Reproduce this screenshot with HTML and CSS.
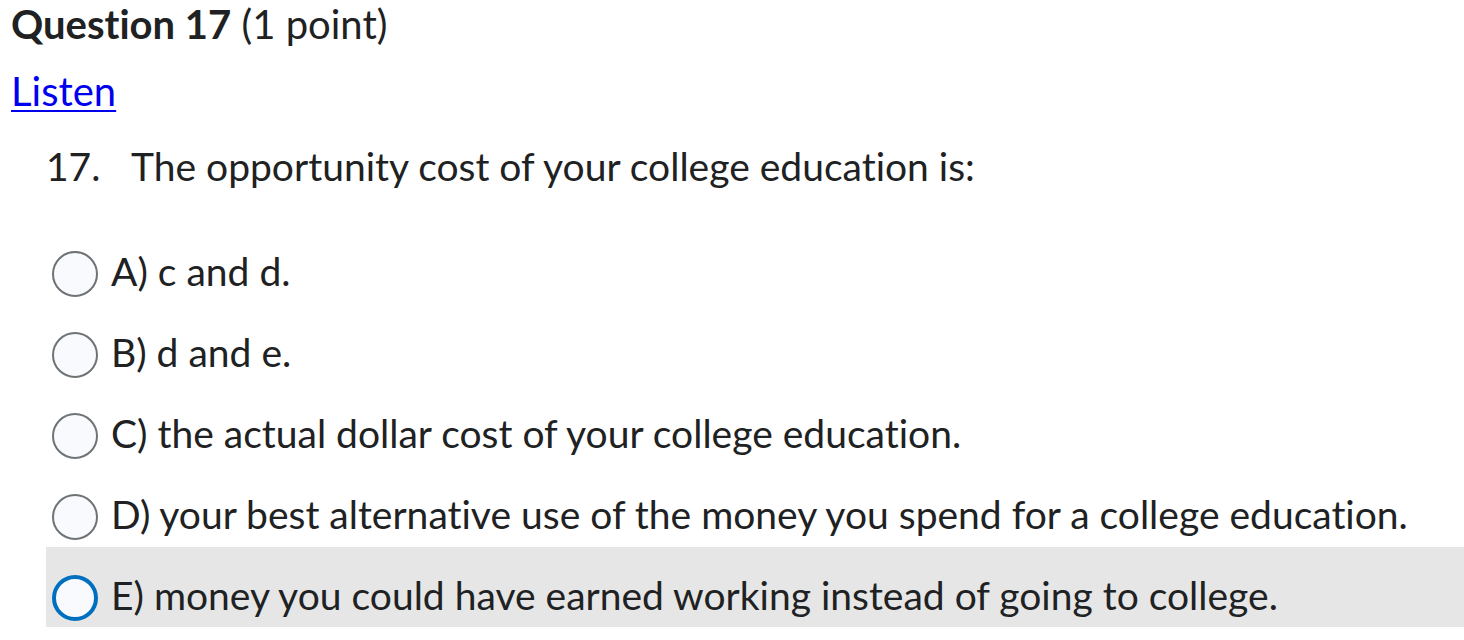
FILE: index.html
```html
<!DOCTYPE html>
<html lang="en">
<head>
<meta charset="utf-8">
<title>Question 17</title>
<link rel="stylesheet" href="styles.css">
</head>
<body>
<main class="quiz">
  <h1 class="q-title"><strong>Question 17</strong> <span class="q-points">(1 point)</span></h1>
  <a class="listen" href="#">Listen</a>
  <div class="q-text">
    <span class="q-num">17.</span>
    <span class="q-body">The opportunity cost of your college education is:</span>
  </div>
  <ul class="options">
    <li class="option"><span class="radio"></span><span class="opt-label">A) c and d.</span></li>
    <li class="option"><span class="radio"></span><span class="opt-label">B) d and e.</span></li>
    <li class="option"><span class="radio"></span><span class="opt-label">C) the actual dollar cost of your college education.</span></li>
    <li class="option"><span class="radio"></span><span class="opt-label">D) your best alternative use of the money you spend for a college education.</span></li>
    <li class="option option-focus"><span class="radio radio-focus"></span><span class="opt-label">E) money you could have earned working instead of going to college.</span></li>
  </ul>
</main>
</body>
</html>
```
FILE: styles.css
```css
html, body {
  margin: 0;
  padding: 0;
  background: #ffffff;
}

body {
  font-family: Lato, "Noto Sans", sans-serif;
  color: #202122;
  overflow: hidden;
  font-variant-ligatures: none;
  font-feature-settings: "liga" 0, "clig" 0;
}

.quiz {
  padding: 0 0 0 11px;
  display: flex;
  flex-direction: column;
  align-items: flex-start;
}

.q-title {
  margin: 0;
  font-size: 40px;
  line-height: 48px;
  font-weight: 400;
}

.q-title strong {
  font-weight: 700;
}

.listen {
  margin-top: 19px;
  font-size: 40px;
  line-height: 48px;
  color: #0000ee;
  text-decoration: underline;
  text-decoration-thickness: 2px;
  text-underline-offset: 4px;
}

.q-text {
  margin-top: 26.5px;
  padding-left: 35px;
  display: flex;
  font-size: 39px;
  line-height: 48px;
}

.q-num {
  width: 85px;
  flex: none;
}

.options {
  list-style: none;
  margin: 33px -40px 0 35px;
  padding: 0;
  align-self: stretch;
}

.option {
  display: flex;
  align-items: flex-start;
  gap: 13px;
  height: 81px;
  box-sizing: border-box;
  padding: 24px 0 0 6px;
  font-size: 39px;
  line-height: 48px;
}

.option-focus {
  background: #e6e6e6;
  height: 80px;
}

.radio {
  flex: none;
  width: 46px;
  height: 46px;
  box-sizing: border-box;
  margin-top: 4px;
  border-radius: 50%;
  border: 2px solid #6e7376;
  background: #f9fafe;
}

.radio-focus {
  border: 4px solid #006fbf;
}

.opt-label {
  white-space: nowrap;
}
```
